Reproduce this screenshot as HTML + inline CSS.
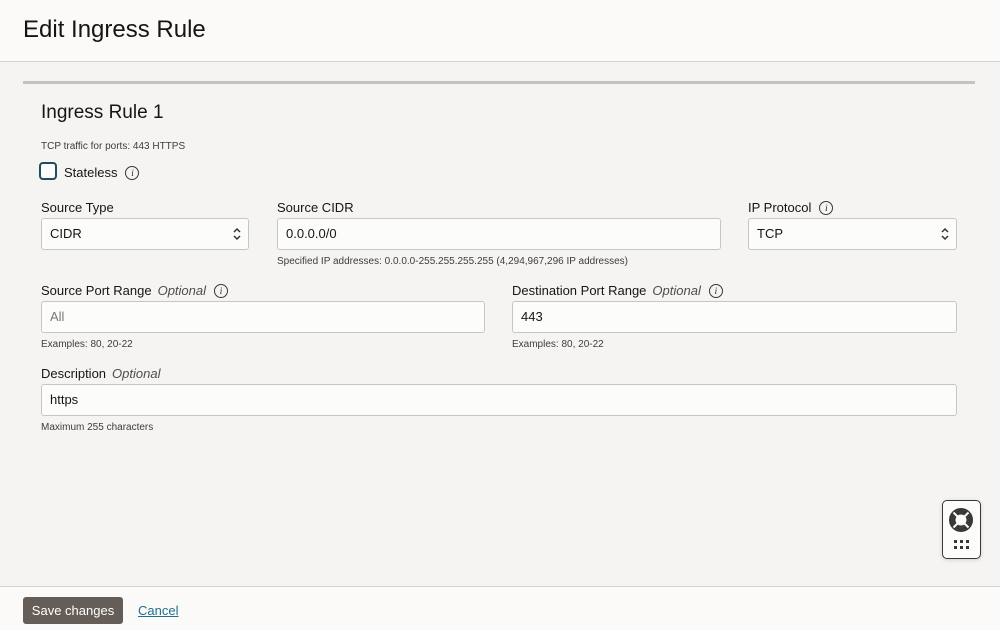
<!DOCTYPE html>
<html><head><style>
*{box-sizing:border-box;margin:0;padding:0}
body{width:1000px;height:630px;position:relative;overflow:hidden;font-family:"Liberation Sans",sans-serif;color:#161513;background:#f5f4f2}
.a{position:absolute}
.hdr{left:0;top:0;width:1000px;height:62px;background:#fbfaf9;border-bottom:1px solid #d6d3cf}
.ftr{left:0;top:586px;width:1000px;height:44px;background:#fbfaf9;border-top:1px solid #d6d3cf}
.lbl{font-size:13px;color:#161513}
.opt{font-style:italic;color:#4f4c49;margin-left:6px}
.inp{background:#fcfcfb;border:1px solid #c9c6c2;border-radius:3px;height:32px;font-size:13px;padding:0 0 0 8px;line-height:30px}
.hint{font-size:10px;color:#3f3c39}
.info{display:inline-block;width:14px;height:14px;border:1px solid #3a3835;border-radius:50%;font-size:9px;font-style:italic;text-align:center;line-height:12px;font-family:"Liberation Serif",serif;vertical-align:1px;margin-left:8px}
.chev{position:absolute;right:6px;top:7px}
</style></head><body>
<div class="a hdr"><div class="a" style="left:23px;top:16px;font-size:24px">Edit Ingress Rule</div></div>
<div class="a" style="left:23px;top:81px;width:952px;height:3px;background:#c5c1bc"></div>
<div class="a" style="left:41px;top:102px;font-size:19px">Ingress Rule 1</div>
<div class="a hint" style="left:41px;top:141px">TCP traffic for ports: 443 HTTPS</div>
<div class="a" style="left:39px;top:162px;width:18px;height:18px;border:2px solid #1f4e5f;border-radius:4px;background:#fcfcfb"></div>
<div class="a lbl" style="left:64px;top:165px">Stateless<span class="info">i</span></div>

<div class="a lbl" style="left:41px;top:200px">Source Type</div>
<div class="a inp" style="left:41px;top:218px;width:208px">CIDR<svg class="chev" width="10" height="16" viewBox="0 0 10 16"><path d="M2 6l3-3 3 3M2 10l3 3 3-3" fill="none" stroke="#333" stroke-width="1.5"/></svg></div>
<div class="a lbl" style="left:277px;top:200px">Source CIDR</div>
<div class="a inp" style="left:277px;top:218px;width:444px">0.0.0.0/0</div>
<div class="a hint" style="left:277px;top:256px">Specified IP addresses: 0.0.0.0-255.255.255.255 (4,294,967,296 IP addresses)</div>
<div class="a lbl" style="left:748px;top:200px">IP Protocol<span class="info">i</span></div>
<div class="a inp" style="left:748px;top:218px;width:209px">TCP<svg class="chev" width="10" height="16" viewBox="0 0 10 16"><path d="M2 6l3-3 3 3M2 10l3 3 3-3" fill="none" stroke="#333" stroke-width="1.5"/></svg></div>

<div class="a lbl" style="left:41px;top:283px">Source Port Range<span class="opt">Optional</span><span class="info">i</span></div>
<div class="a inp" style="left:41px;top:301px;width:444px;color:#7a7672">All</div>
<div class="a hint" style="left:41px;top:339px">Examples: 80, 20-22</div>
<div class="a lbl" style="left:512px;top:283px">Destination Port Range<span class="opt">Optional</span><span class="info">i</span></div>
<div class="a inp" style="left:512px;top:301px;width:445px">443</div>
<div class="a hint" style="left:512px;top:339px">Examples: 80, 20-22</div>

<div class="a lbl" style="left:41px;top:366px">Description<span class="opt">Optional</span></div>
<div class="a inp" style="left:41px;top:384px;width:916px">https</div>
<div class="a hint" style="left:41px;top:422px">Maximum 255 characters</div>

<div class="a" style="left:942px;top:500px;width:39px;height:59px;border:1.5px solid #3a3835;border-radius:5px;background:#fcfcfb;box-shadow:0 1px 4px rgba(0,0,0,.15)">
<svg width="36" height="56" viewBox="0 0 36 56"><circle cx="18" cy="19" r="11" fill="none" stroke="#3a3835" stroke-width="2"/><circle cx="18" cy="19" r="6.5" fill="none" stroke="#3a3835" stroke-width="2"/><circle cx="18" cy="19" r="8.8" fill="none" stroke="#3a3835" stroke-width="3"/><path d="M10.5 11.5l4 4M25.5 11.5l-4 4M10.5 26.5l4-4M25.5 26.5l-4-4" stroke="#fcfcfb" stroke-width="2"/><g fill="#3a3835"><rect x="11" y="39" width="3" height="3"/><rect x="17" y="39" width="3" height="3"/><rect x="23" y="39" width="3" height="3"/><rect x="11" y="45" width="3" height="3"/><rect x="17" y="45" width="3" height="3"/><rect x="23" y="45" width="3" height="3"/></g></svg></div>

<div class="a ftr">
<div class="a" style="left:23px;top:10px;width:100px;height:27px;background:#655d57;border-radius:3px;color:#fff;font-size:13px;text-align:center;line-height:27px">Save changes</div>
<div class="a" style="left:138px;top:16px;font-size:13px;color:#1f6f8f;text-decoration:underline">Cancel</div>
</div>
</body></html>
